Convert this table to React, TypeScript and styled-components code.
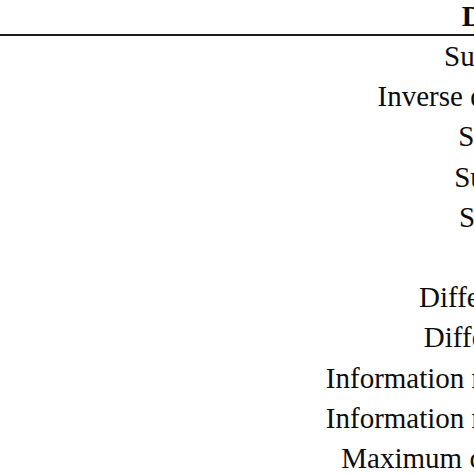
import React from "react";
import styled, { createGlobalStyle } from "styled-components";

const Global = createGlobalStyle`
  html, body {
    margin: 0;
    padding: 0;
    background: #ffffff;
    overflow: hidden;
  }
  body {
    width: 474px;
    height: 474px;
  }
`;

const Viewport = styled.div`
  width: 474px;
  height: 474px;
  overflow: hidden;
  background: #ffffff;
`;

const Table = styled.table`
  border-collapse: collapse;
  border-spacing: 0;
  width: 1067px;
  table-layout: fixed;
  font-family: "Liberation Serif", "Times New Roman", serif;
  font-size: 29px;
  color: #0d0d0d;
`;

const HeadCell = styled.th`
  height: 34px;
  padding: 0;
  line-height: 32px;
  vertical-align: top;
  text-align: center;
  font-weight: 700;
  white-space: nowrap;
  border-bottom: 2px solid #1c1c1c;
`;

const Cell = styled.td`
  padding: 1px 0 0 0;
  line-height: 39.2px;
  vertical-align: top;
  text-align: center;
  font-weight: 400;
  white-space: nowrap;
`;

const Sub = styled.sub`
  font-size: 0.6em;
  line-height: 0;
  vertical-align: -0.25em;
`;

type Row = { label: string; index?: string };

const rows: Row[] = [
  { label: "Sum of squares" },
  { label: "Inverse difference moment" },
  { label: "Sum average" },
  { label: "Sum variance" },
  { label: "Sum entropy" },
  { label: "Entropy" },
  { label: "Difference variance" },
  { label: "Difference entropy" },
  { label: "Information measure of correlation", index: "1" },
  { label: "Information measure of correlation", index: "2" },
  { label: "Maximum correlation coefficient" },
];

export default function App() {
  return (
    <Viewport>
      <Global />
      <Table>
        <thead>
          <tr>
            <HeadCell>Description</HeadCell>
          </tr>
        </thead>
        <tbody>
          {rows.map((r, i) => (
            <tr key={i}>
              <Cell>
                {r.label}
                {r.index && <Sub>{r.index}</Sub>}
              </Cell>
            </tr>
          ))}
        </tbody>
      </Table>
    </Viewport>
  );
}
